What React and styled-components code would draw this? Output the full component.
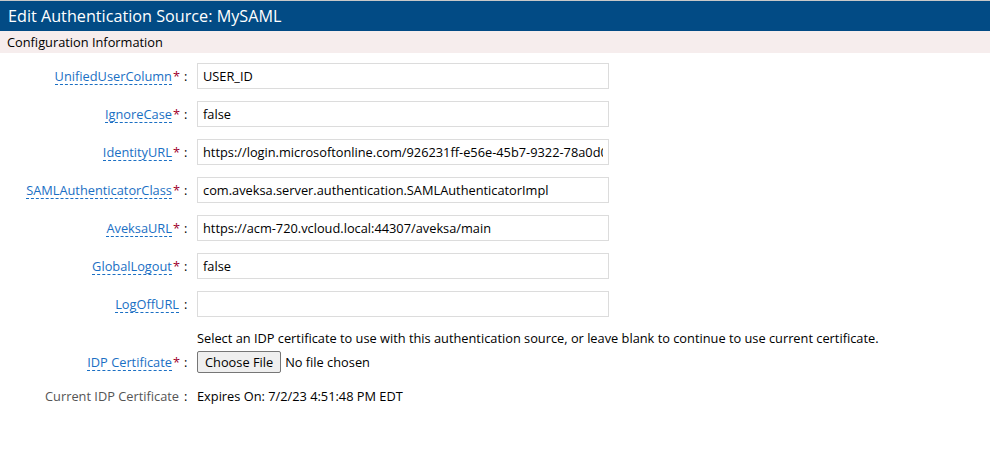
import React from "react";
import styled, { createGlobalStyle } from "styled-components";

const GlobalStyle = createGlobalStyle`
  html, body {
    margin: 0;
    padding: 0;
    background: #fff;
  }
  body {
    font-family: "Open Sans", "Noto Sans", sans-serif;
    font-size: 12.8px;
    color: #000;
  }
`;

const Page = styled.div`
  width: 990px;
  border-top: 1px solid #c8c8c8;
`;

const TitleBar = styled.div`
  height: 30px;
  background: #024b85;
  color: #fff;
  font-size: 16.2px;
  display: flex;
  align-items: center;
  padding-left: 8px;
`;

const SectionBar = styled.div`
  height: 22px;
  background: #f6eded;
  display: flex;
  align-items: center;
  padding-left: 7px;
`;

const Form = styled.div`
  display: grid;
  grid-template-columns: 188px 412px;
  column-gap: 9px;
  row-gap: 12px;
  padding-top: 10px;
  align-items: center;
`;

const LabelCell = styled.div`
  display: flex;
  justify-content: flex-end;
  align-items: center;
  white-space: nowrap;
  margin-top: ${(p) => p.$shift || 0}px;
`;

const FieldLabel = styled.span`
  color: #1a6fc4;
  border-bottom: 1px dashed #1a6fc4;
  line-height: 16px;
  cursor: help;
`;

const PlainLabel = styled.span`
  color: #555;
`;

const Star = styled.span`
  color: #a0002a;
  margin-left: 1px;
  margin-right: 4px;
`;

const Spacer = styled.span`
  width: 5px;
`;

const Colon = styled.span`
  width: 4px;
  text-align: left;
`;

const TextInput = styled.input`
  box-sizing: border-box;
  width: 412px;
  height: 26px;
  border: 1px solid #dcdcdc;
  padding: 0 5px;
  font-family: inherit;
  font-size: 12.8px;
  color: #000;
  outline: none;
`;

const Hint = styled.div`
  grid-column: 2;
  white-space: nowrap;
  margin-bottom: -8px;
`;

const FileRow = styled.div`
  display: flex;
  align-items: center;
  gap: 4px;
`;

const FileButton = styled.button`
  font-family: inherit;
  font-size: 12.8px;
  height: 22px;
  padding: 0 7px;
  background: #efefef;
  border: 1px solid #767676;
  border-radius: 2px;
  color: #000;
`;

const Value = styled.div`
  margin-top: ${(p) => p.$shift || 0}px;
`;

const fields = [
  { name: "UnifiedUserColumn", value: "USER_ID" },
  { name: "IgnoreCase", value: "false" },
  {
    name: "IdentityURL",
    value: "https://login.microsoftonline.com/926231ff-e56e-45b7-9322-78a0d0",
  },
  {
    name: "SAMLAuthenticatorClass",
    value: "com.aveksa.server.authentication.SAMLAuthenticatorImpl",
  },
  { name: "AveksaURL", value: "https://acm-720.vcloud.local:44307/aveksa/main" },
  { name: "GlobalLogout", value: "false" },
  { name: "LogOffURL", value: "", optional: true },
];

const App = () => {
  return (
    <Page>
      <GlobalStyle />
      <TitleBar>Edit Authentication Source: MySAML</TitleBar>
      <SectionBar>Configuration Information</SectionBar>
      <Form>
        {fields.map((f) => (
          <React.Fragment key={f.name}>
            <LabelCell>
              <FieldLabel>{f.name}</FieldLabel>
              {f.optional ? <Spacer /> : <Star>*</Star>}
              <Colon>:</Colon>
            </LabelCell>
            <TextInput defaultValue={f.value} readOnly />
          </React.Fragment>
        ))}
        <Hint>
          Select an IDP certificate to use with this authentication source, or
          leave blank to continue to use current certificate.
        </Hint>
        <LabelCell>
          <FieldLabel>IDP Certificate</FieldLabel>
          <Star>*</Star>
          <Colon>:</Colon>
        </LabelCell>
        <FileRow>
          <FileButton>Choose File</FileButton>
          <span>No file chosen</span>
        </FileRow>
        <LabelCell $shift={2}>
          <PlainLabel>Current IDP Certificate</PlainLabel>
          <Spacer />
          <Colon>:</Colon>
        </LabelCell>
        <Value $shift={2}>Expires On: 7/2/23 4:51:48 PM EDT</Value>
      </Form>
    </Page>
  );
};

export default App;
